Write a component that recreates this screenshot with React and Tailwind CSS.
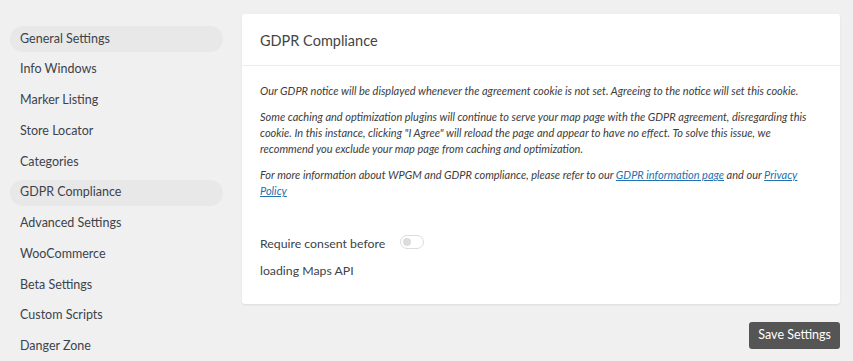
export default function App() {
  const items = [
    "General Settings",
    "Info Windows",
    "Marker Listing",
    "Store Locator",
    "Categories",
    "GDPR Compliance",
    "Advanced Settings",
    "WooCommerce",
    "Beta Settings",
    "Custom Scripts",
    "Danger Zone",
  ];
  const active = ["General Settings", "GDPR Compliance"];
  return (
    <div className="w-[853px] h-[361px] overflow-hidden bg-[#f0f0f1] flex text-[#3c434a]" style={{ fontFamily: 'Lato, "Noto Sans", sans-serif' }}>
      <div className="w-[242px] shrink-0 pl-[10px] pr-[19px] pt-[26px] flex flex-col gap-[4.75px]">
        {items.map((it) => (
          <div
            key={it}
            className={`h-[26px] shrink-0 flex items-center pl-[10px] rounded-full text-[12.5px] ${active.includes(it) ? "bg-[#e8e8e8]" : ""}`}
          >
            {it}
          </div>
        ))}
      </div>
      <div className="flex-1 pt-[14px] pr-[13px] flex flex-col items-end">
        <div className="w-full bg-white rounded-[3px] shadow-[0_1px_2px_rgba(0,0,0,0.08)]">
          <div className="h-[52px] border-b border-[#ececec] flex items-center pl-[18px] pt-[3px] text-[14.5px] text-[#444]">
            GDPR Compliance
          </div>
          <div className="px-[18px] pt-[17px] text-[11px] italic leading-[16px] text-[#3c3c3c]">
            <p className="mb-[10px]">
              Our GDPR notice will be displayed whenever the agreement cookie is not set. Agreeing to the notice will set this cookie.
            </p>
            <p className="mb-[10px]">
              Some caching and optimization plugins will continue to serve your map page with the GDPR agreement, disregarding this cookie. In this instance, clicking "I Agree" will reload the page and appear to have no effect. To solve this issue, we recommend you exclude your map page from caching and optimization.
            </p>
            <p>
              For more information about WPGM and GDPR compliance, please refer to our{" "}
              <span className="text-[#2271b1] underline">GDPR information page</span> and our{" "}
              <span className="text-[#2271b1] underline">Privacy Policy</span>
            </p>
          </div>
          <div className="px-[18px] pt-[31px] pb-[20px] flex text-[12.3px] text-[#3c434a]">
            <div className="w-[140px] leading-[27px]">
              <div>Require consent before</div>
              <div>loading Maps API</div>
            </div>
            <div className="pt-[5px]">
              <div className="w-[24px] h-[14px] rounded-full border border-[#dcdcdc] bg-white flex items-center pl-[2px]">
                <div className="w-[8px] h-[8px] rounded-full bg-[#dcdcdc]" />
              </div>
            </div>
          </div>
        </div>
        <button className="mt-[18px] h-[27px] px-[9px] rounded-[3px] bg-[#555555] text-white text-[12.5px]">
          Save Settings
        </button>
      </div>
    </div>
  );
}
